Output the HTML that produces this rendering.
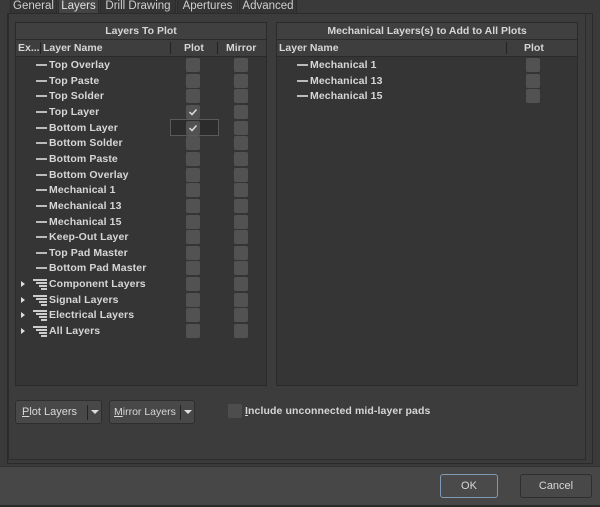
<!DOCTYPE html>
<html><head><style>
*{margin:0;padding:0;box-sizing:border-box}
body{width:600px;height:507px;background:#3a3a3a;font-family:"Liberation Sans",sans-serif;font-size:10.5px;color:#d6d6d6;position:relative;overflow:hidden}
.a{position:absolute}
.tab{position:absolute;top:0;height:14px;background:#343434;border:1px solid #2c2c2c;border-top:none;line-height:12px;text-align:center;font-size:11.5px;color:#cfcfcf}
.cb{position:absolute;width:14px;height:14px;background:#525252;border-radius:2px}
.lbl{position:absolute;white-space:nowrap;font-weight:bold;letter-spacing:0.1px}
.dash{position:absolute;width:11px;height:2px;background:#bbb}
.btn{position:absolute;background:#484848;border:1px solid #2e2e2e;border-radius:3px;height:24px;line-height:22px;font-size:11px;color:#d8d8d8}
</style></head><body>
<div class="a" style="left:7px;top:13px;width:586px;height:451px;border:1px solid #2a2a2a;background:#3b3b3b"></div>
<div class="a" style="left:8px;top:14px;width:578px;height:446px;border:1px solid #2c2c2c;border-top:none;background:#3c3c3c"></div>
<div class="tab" style="left:10px;width:47px">General</div>
<div class="tab" style="left:58px;width:41px;background:#444;color:#e0e0e0">Layers</div>
<div class="tab" style="left:100px;width:76px">Drill Drawing</div>
<div class="tab" style="left:177px;width:61px">Apertures</div>
<div class="tab" style="left:239px;width:58px">Advanced</div>
<div class="a" style="left:15px;top:22px;width:252px;height:364px;border:1px solid #2a2a2a;background:#353535"></div>
<div class="a" style="left:16px;top:23px;width:250px;height:17px;background:#404040;border-bottom:1px solid #2a2a2a;text-align:center;line-height:17px;font-weight:bold">Layers To Plot</div>
<div class="a" style="left:16px;top:40px;width:250px;height:17px;background:#3e3e3e;border-bottom:1px solid #2a2a2a;line-height:16px;font-weight:bold">
<span class="a" style="left:2px">Ex...</span><span class="a" style="left:24px;top:2px;width:1px;height:12px;background:#222"></span>
<span class="a" style="left:27px">Layer Name</span><span class="a" style="left:154px;top:2px;width:1px;height:12px;background:#222"></span>
<span class="a" style="left:168px">Plot</span><span class="a" style="left:201px;top:2px;width:1px;height:12px;background:#222"></span>
<span class="a" style="left:210px">Mirror</span></div>
<div class="a" style="left:276px;top:22px;width:302px;height:364px;border:1px solid #2a2a2a;background:#353535"></div>
<div class="a" style="left:277px;top:23px;width:300px;height:17px;background:#404040;border-bottom:1px solid #2a2a2a;text-align:center;line-height:17px;font-weight:bold">Mechanical Layers(s) to Add to All Plots</div>
<div class="a" style="left:277px;top:40px;width:300px;height:17px;background:#3e3e3e;border-bottom:1px solid #2a2a2a;line-height:16px;font-weight:bold">
<span class="a" style="left:2px">Layer Name</span><span class="a" style="left:229px;top:2px;width:1px;height:12px;background:#222"></span>
<span class="a" style="left:247px">Plot</span></div>
<div id="rows"></div>
<div class="btn" style="left:15px;top:400px;width:87px"><span style="margin-left:6px"><u>P</u>lot Layers</span><span class="a" style="left:71px;top:4px;width:1px;height:15px;background:#222"></span><span class="a" style="left:75px;top:9px;border:4px solid transparent;border-top:4px solid #ddd"></span></div>
<div class="btn" style="left:109px;top:400px;width:86px"><span style="margin-left:4px;font-size:10.5px"><u>M</u>irror Layers</span><span class="a" style="left:70px;top:4px;width:1px;height:15px;background:#222"></span><span class="a" style="left:74px;top:9px;border:4px solid transparent;border-top:4px solid #ddd"></span></div>
<div class="cb" style="left:228px;top:404px;width:14px;height:14px;background:#4d4d4d"></div>
<div class="lbl" style="left:245px;top:405px"><u>I</u>nclude unconnected mid-layer pads</div>
<div class="a" style="left:0;top:466px;width:600px;height:41px;background:#474747;border-top:1px solid #303030"></div>
<div class="a" style="left:0;top:505px;width:600px;height:2px;background:#2a2a2a"></div>
<div class="btn" style="left:440px;top:474px;width:58px;height:24px;border:1px solid #7d9ab5;background:#4a4a4a;text-align:center">OK</div>
<div class="btn" style="left:520px;top:474px;width:72px;height:24px;text-align:center">Cancel</div>
<script>
var L=["Top Overlay","Top Paste","Top Solder","Top Layer","Bottom Layer","Bottom Solder","Bottom Paste","Bottom Overlay","Mechanical 1","Mechanical 13","Mechanical 15","Keep-Out Layer","Top Pad Master","Bottom Pad Master","Component Layers","Signal Layers","Electrical Layers","All Layers"];
var h="";
L.forEach(function(n,i){var c=65+i*15.65;var t=c-7;
if(i<14){h+='<div class="dash" style="left:36px;top:'+(c-1)+'px"></div>';}
else{h+='<div class="a" style="left:21px;top:'+(c-3)+'px;border-left:4px solid #ddd;border-top:3px solid transparent;border-bottom:3px solid transparent"></div>';
h+='<div class="a" style="left:33px;top:'+(c-5)+'px;width:14px;height:2px;background:#ccc"></div><div class="a" style="left:36px;top:'+(c-2)+'px;width:11px;height:2px;background:#ccc"></div><div class="a" style="left:39px;top:'+(c+1)+'px;width:8px;height:2px;background:#ccc"></div><div class="a" style="left:41px;top:'+(c+4)+'px;width:6px;height:2px;background:#ccc"></div>';}
h+='<div class="lbl" style="left:49px;top:'+(t+1)+'px">'+n+'</div>';
if(i==4)h+='<div class="a" style="left:170px;top:'+(c-9)+'px;width:49px;height:17px;border:1px solid #5a5a5a;background:#2c2c2c"></div>';
var ck=(i==3||i==4)?'<svg width="14" height="14" style="position:absolute;left:0;top:0"><path d="M3.5 7 L6 9.5 L10.5 4.5" stroke="#ddd" stroke-width="1.5" fill="none"/></svg>':'';
h+='<div class="cb" style="left:186px;top:'+(t)+'px">'+ck+'</div><div class="cb" style="left:234px;top:'+(t)+'px"></div>';
});
["Mechanical 1","Mechanical 13","Mechanical 15"].forEach(function(n,i){var c=65+i*15.65;
h+='<div class="dash" style="left:297px;top:'+(c-1)+'px"></div><div class="lbl" style="left:310px;top:'+(c-6)+'px">'+n+'</div><div class="cb" style="left:526px;top:'+(c-7)+'px"></div>';});
document.getElementById("rows").innerHTML=h;
</script>
</body></html>
